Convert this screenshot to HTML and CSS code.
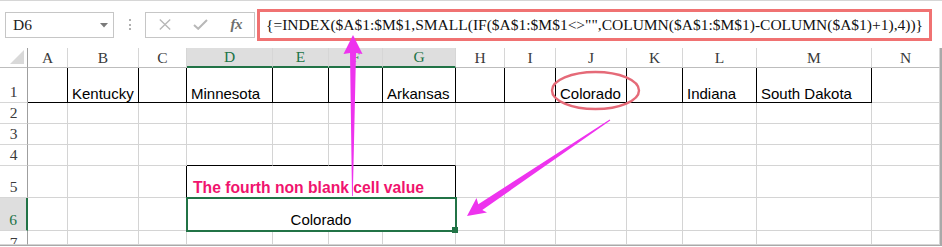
FILE: index.html
```html
<!DOCTYPE html>
<html>
<head>
<meta charset="utf-8">
<link rel="stylesheet" href="styles.css">
</head>
<body>
<div class="page">
  <div class="fbar">
    <div class="namebox"><span>D6</span><svg class="dd" width="8" height="5" viewBox="0 0 8 5"><polygon points="0,0 8,0 4,4.5" fill="#7a7a7a"/></svg></div>
    <div class="dots"><i></i><i></i><i></i></div>
    <div class="btns">
      <span class="btn"><svg width="12" height="11" viewBox="0 0 12 11"><path d="M0.8 0.6 L11.2 10.4 M11.2 0.6 L0.8 10.4" stroke="#b8b8b8" stroke-width="1.4" fill="none"/></svg></span>
      <span class="btn"><svg width="15" height="11" viewBox="0 0 15 11"><path d="M1 6 L5.2 9.8 L14 1" stroke="#b8b8b8" stroke-width="2" fill="none"/></svg></span>
      <span class="btn fx">fx</span>
    </div>
    <div class="formula">{=INDEX($A$1:$M$1,SMALL(IF($A$1:$M$1&lt;&gt;"",COLUMN($A$1:$M$1)-COLUMN($A$1)+1),4))}</div>
  </div>
  <div class="sheet">
    <div class="h corner"><svg width="14" height="14" viewBox="0 0 14 14"><polygon points="14,0 14,14 0,14" fill="#d9d9d9"/></svg></div>
    <div class="h">A</div><div class="h">B</div><div class="h">C</div>
    <div class="h sel">D</div><div class="h sel">E</div><div class="h sel">F</div><div class="h sel">G</div>
    <div class="h">H</div><div class="h">I</div><div class="h">J</div><div class="h">K</div><div class="h">L</div><div class="h">M</div><div class="h">N</div>

    <div class="r">1</div>
    <div class="c k"></div><div class="c k">Kentucky</div><div class="c k"></div><div class="c k">Minnesota</div><div class="c k"></div><div class="c k"></div><div class="c k">Arkansas</div><div class="c k"></div><div class="c k"></div><div class="c k">Colorado</div><div class="c k"></div><div class="c k">Indiana</div><div class="c k">South Dakota</div><div class="c"></div>

    <div class="r">2</div>
    <div class="c"></div><div class="c"></div><div class="c"></div><div class="c"></div><div class="c"></div><div class="c"></div><div class="c"></div><div class="c"></div><div class="c"></div><div class="c"></div><div class="c"></div><div class="c"></div><div class="c"></div><div class="c"></div>

    <div class="r">3</div>
    <div class="c"></div><div class="c"></div><div class="c"></div><div class="c"></div><div class="c"></div><div class="c"></div><div class="c"></div><div class="c"></div><div class="c"></div><div class="c"></div><div class="c"></div><div class="c"></div><div class="c"></div><div class="c"></div>

    <div class="r">4</div>
    <div class="c"></div><div class="c"></div><div class="c"></div><div class="c kb"></div><div class="c kb"></div><div class="c kb"></div><div class="c kb"></div><div class="c"></div><div class="c"></div><div class="c"></div><div class="c"></div><div class="c"></div><div class="c"></div><div class="c"></div>

    <div class="r">5</div>
    <div class="c"></div><div class="c"></div><div class="c kr"></div>
    <div class="c span4 note">The fourth non blank cell value</div>
    <div class="c"></div><div class="c"></div><div class="c"></div><div class="c"></div><div class="c"></div><div class="c"></div><div class="c"></div>

    <div class="r sel">6</div>
    <div class="c"></div><div class="c"></div><div class="c"></div>
    <div class="c span4 active">Colorado</div>
    <div class="c"></div><div class="c"></div><div class="c"></div><div class="c"></div><div class="c"></div><div class="c"></div><div class="c"></div>

    <div class="r r7">7</div>
    <div class="c"></div><div class="c"></div><div class="c"></div><div class="c"></div><div class="c"></div><div class="c"></div><div class="c"></div><div class="c"></div><div class="c"></div><div class="c"></div><div class="c"></div><div class="c"></div><div class="c"></div><div class="c"></div>
  </div>
  <svg class="marks" width="942" height="247" viewBox="0 0 942 247">
    <ellipse cx="595.5" cy="90.5" rx="43.5" ry="18.5" fill="none" stroke="#e56a78" stroke-width="2.4"/>
    <polygon points="353,35 362.5,54 356,53 352.8,196 352,196 350,53 343.5,54" fill="#ee33ee"/>
    <polygon points="467,216 476.5,198 478.3,204.2 609.7,119.6 610.3,120.4 482.3,210 487,212.5" fill="#ee33ee"/>
  </svg>
</div>
</body>
</html>
```
FILE: styles.css
```css
* { box-sizing: border-box; }
body { margin: 0; background: #fff; }
.page {
  position: relative;
  width: 942px;
  height: 247px;
  overflow: hidden;
  background: #fff;
  font-family: "Liberation Sans", Arial, sans-serif;
}
.fbar {
  height: 48px;
  border-top: 1px solid #d6d6d6;
  display: flex;
  align-items: center;
}
.namebox {
  margin-left: 5px;
  width: 109px;
  height: 26px;
  border: 1px solid #c6c6c6;
  display: flex;
  align-items: center;
  justify-content: space-between;
  padding: 0 5px 0 7px;
  font-family: "Liberation Serif", serif;
  font-size: 15.5px;
  color: #222;
}
.dd { margin-top: 1px; }
.dots {
  width: 31px;
  display: flex;
  flex-direction: column;
  align-items: center;
  gap: 2.5px;
}
.dots i { display: block; width: 2px; height: 2px; background: #b0b0b0; }
.btns {
  width: 110px;
  height: 26px;
  border: 1px solid #c6c6c6;
  display: flex;
  align-items: center;
  padding-left: 0;
}
.btn {
  width: 36px;
  display: flex;
  justify-content: center;
  align-items: center;
}
.btn:first-child { margin-left: 1px; }
.fx {
  font-family: "Liberation Serif", serif;
  font-style: italic;
  font-weight: bold;
  font-size: 15px;
  color: #6e6e6e;
  letter-spacing: -0.5px;
}
.formula {
  margin-left: 2px;
  width: 675px;
  height: 32px;
  border: 3px solid #f07272;
  padding-left: 6px;
  display: flex;
  align-items: center;
  white-space: nowrap;
  font-family: "Liberation Serif", serif;
  font-size: 15.5px;
  color: #111;
}
.sheet {
  display: grid;
  grid-template-columns: 28px 40px 71px 48px 86px 56px 54px 73px 49px 51px 71px 56px 74px 115px 68px;
  grid-template-rows: 20px 35px 21px 21px 21px 32px 33px 14px;
  width: 942px;
  height: 198px;
  border-right: 2px solid #a9a9a9;
  border-bottom: 2px solid #a9a9a9;
}
.h {
  display: flex;
  align-items: center;
  justify-content: center;
  border-right: 1px solid #d6d6d6;
  border-bottom: 1px solid #bdbdbd;
  font-family: "Liberation Serif", serif;
  font-size: 15.5px;
  color: #3a3a3a;
}
.h.corner {
  align-items: flex-end;
  justify-content: flex-end;
  padding: 0 3px 3px 0;
  border-right: 1px solid #9f9f9f;
}
.h.sel {
  background: #dedede;
  color: #217346;
  border-bottom: 2px solid #217346;
}
.r {
  display: flex;
  align-items: flex-end;
  justify-content: center;
  border-right: 1px solid #9f9f9f;
  border-bottom: 1px solid #d6d6d6;
  font-family: "Liberation Serif", serif;
  font-size: 15.5px;
  color: #3a3a3a;
  padding-bottom: 1px;
}
.r.sel {
  background: #dedede;
  color: #217346;
  border-right: 2px solid #217346;
}
.r7 {
  align-items: flex-start;
  padding-top: 3px;
  overflow: hidden;
}
.c {
  display: flex;
  align-items: flex-end;
  padding: 0 0 0 4px;
  border-right: 1px solid #d4d4d4;
  border-bottom: 1px solid #d4d4d4;
  font-size: 15px;
  color: #000;
  white-space: nowrap;
}
.c.k { border-right-color: #000; border-bottom-color: #000; }
.c.kb { border-bottom-color: #000; }
.c.kr { border-right-color: #000; }
.span4 { grid-column: span 4; }
.note {
  border-right-color: #000;
  padding-left: 6px;
  font-weight: bold;
  font-size: 15.7px;
  color: #f0146e;
}
.active {
  position: relative;
  z-index: 1;
  justify-content: center;
  padding: 0 0 2px 0;
  outline: 2px solid #217346;
  outline-offset: -1px;
}
.active::after {
  content: "";
  position: absolute;
  right: -3px;
  bottom: -3px;
  width: 6px;
  height: 6px;
  background: #217346;
}
.marks {
  position: absolute;
  left: 0;
  top: 0;
  z-index: 2;
  pointer-events: none;
}
```
